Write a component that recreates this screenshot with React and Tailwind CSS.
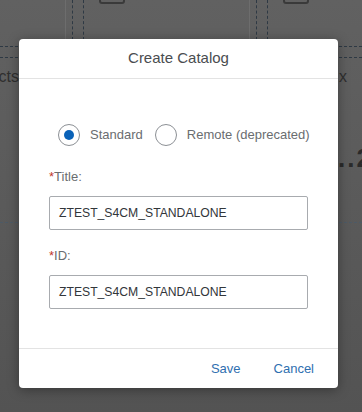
import React from "react";

const font = { fontFamily: '"Liberation Sans", Arial, sans-serif' };

function Radio({ checked, label }) {
  return (
    <label className="flex shrink-0 items-center gap-[10px] whitespace-nowrap">
      <span className="flex h-[22px] w-[22px] shrink-0 items-center justify-center rounded-full border border-[#8c9095] bg-white">
        {checked && <span className="h-[10px] w-[10px] rounded-full bg-[#0a62b8]" />}
      </span>
      <span className="text-[13px] text-[#6a6d70]">{label}</span>
    </label>
  );
}

function Field({ label, value }) {
  return (
    <div className="flex flex-col">
      <div className="h-[18px] text-[13px] leading-[18px] text-[#6a6d70]">
        <span className="text-[#c0392b]">*</span>
        {label}
      </div>
      <div className="mt-[10px] flex h-[34px] items-center rounded-[2px] border border-[#a8abaf] px-[9px] text-[12.2px] text-[#32363a]">
        {value}
      </div>
    </div>
  );
}

export default function App() {
  return (
    <div
      className="relative h-[412px] w-[362px] overflow-hidden bg-gradient-to-b from-[#616161] to-[#535353]"
      style={font}
    >
      {/* dimmed page behind the dialog */}
      <div className="absolute left-[65px] top-0 h-[40px] w-px bg-[#6d6d6d]" />
      <div className="absolute left-[72px] top-0 h-[40px] border-l border-dashed border-[#2e3944]" />
      <div className="absolute left-[83px] top-0 h-[40px] border-l border-dashed border-[#2e3944]" />
      <div className="absolute left-[99px] top-[-20px] h-[24px] w-[26px] rounded-[3px] border-2 border-[#3a3a3a]" />
      <div className="absolute left-[249px] top-0 h-[40px] w-px bg-[#6d6d6d]" />
      <div className="absolute left-[256px] top-0 h-[40px] border-l border-dashed border-[#2e3944]" />
      <div className="absolute left-[267px] top-0 h-[40px] border-l border-dashed border-[#2e3944]" />
      <div className="absolute left-[283px] top-[-20px] h-[24px] w-[26px] rounded-[3px] border-2 border-[#3a3a3a]" />

      <div className="absolute left-0 top-[46px] w-[362px] border-t border-dashed border-[#2e3944]" />
      <div className="absolute left-0 top-[57px] w-[362px] border-t border-dashed border-[#2e3944]" />
      <div className="absolute left-0 top-[222px] w-[362px] border-t border-dashed border-[#4d5a66]" />

      <div className="absolute right-[343px] top-[67px] text-[16px] leading-[20px] text-[#2f2f2f]">Projects</div>
      <div className="absolute left-[339px] top-[67px] text-[16px] leading-[20px] text-[#2f2f2f]">x</div>
      <div className="absolute left-[338px] top-[143px] text-[26px] font-bold leading-[30px] tracking-[2px] text-[#2a2a2a]">..2</div>

      {/* dialog */}
      <div className="absolute left-[19px] top-[39px] flex h-[349px] w-[319px] flex-col rounded-[4px] bg-white shadow-[0_2px_12px_rgba(0,0,0,0.35)]">
        <div className="flex h-[40px] shrink-0 items-center justify-center border-b border-[#e3e3e3] text-[15px] text-[#4a4d50]">
          Create Catalog
        </div>
        <div className="flex flex-1 flex-col px-[30px] pt-[45px]">
          <div className="-mr-[10px] flex items-center gap-[12px] pl-[9px]">
            <Radio checked label="Standard" />
            <Radio label="Remote (deprecated)" />
          </div>
          <div className="mt-[22px] flex flex-col gap-[17px]">
            <Field label="Title:" value="ZTEST_S4CM_STANDALONE" />
            <Field label="ID:" value="ZTEST_S4CM_STANDALONE" />
          </div>
        </div>
        <div className="flex h-[40px] shrink-0 items-center justify-end gap-[33px] border-t border-[#e3e3e3] pr-[24px] text-[13px] text-[#2f6fb0]">
          <span>Save</span>
          <span>Cancel</span>
        </div>
      </div>
    </div>
  );
}
